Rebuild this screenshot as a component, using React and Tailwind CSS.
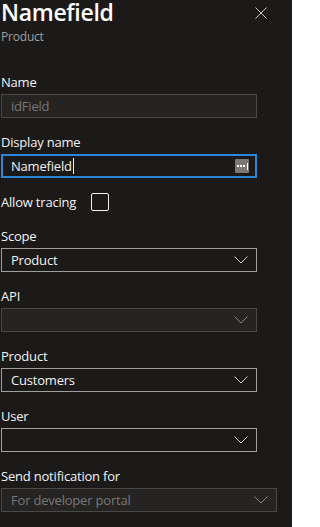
import React from "react";

const Chevron = ({ muted }) => (
  <svg
    width="14"
    height="8"
    viewBox="0 0 14 8"
    fill="none"
    className={muted ? "text-[#8a8886]" : "text-[#d2d0ce]"}
  >
    <path d="M0.5 0.5 L7 7 L13.5 0.5" stroke="currentColor" strokeWidth="1" />
  </svg>
);

const Label = ({ children }) => (
  <div className="text-[13px] leading-[20px] tracking-[-0.2px] text-[#f3f2f1]">{children}</div>
);

const Select = ({ value, disabled, width = "w-[256px]" }) => (
  <div
    className={`${width} h-[24px] mt-[2px] flex items-center justify-between pl-[9px] pr-[8px] border ${
      disabled ? "border-[#4a4846] bg-[#252423] text-[#797775]" : "border-[#a19f9d] bg-[#1b1a19] text-[#f3f2f1]"
    }`}
  >
    <span className="text-[13px] leading-[20px] tracking-[-0.2px]">{value}</span>
    <Chevron muted={disabled} />
  </div>
);

const Field = ({ label, children }) => (
  <div className="mt-[14px]">
    <Label>{label}</Label>
    {children}
  </div>
);

export default function App() {
  return (
    <div
      className="w-[292px] h-[527px] bg-[#1b1a19] overflow-hidden pl-[1px]"
      style={{ fontFamily: '"Open Sans", "Noto Sans", sans-serif' }}
    >
      <div className="flex items-start justify-between">
        <div>
          <div className="text-[23px] leading-[24px] font-semibold text-white tracking-[-0.3px]">
            Namefield
          </div>
          <div className="text-[12px] leading-[16px] tracking-[-0.2px] text-[#a19f9d] mt-[5px]">Product</div>
        </div>
        <button type="button" className="mt-[7px] mr-[25px]" aria-label="Close">
          <svg width="12" height="12" viewBox="0 0 12 12" fill="none">
            <path d="M0.5 0.5 L11.5 11.5 M11.5 0.5 L0.5 11.5" stroke="#c8c6c4" strokeWidth="1" />
          </svg>
        </button>
      </div>

      <div className="mt-[27px]">
        <Label>Name</Label>
        <div className="w-[256px] h-[24px] mt-[2px] flex items-center pl-[9px] border border-[#4a4846] bg-[#252423]">
          <span className="text-[13px] leading-[20px] tracking-[-0.2px] text-[#797775]">idField</span>
        </div>
      </div>

      <Field label="Display name">
        <div className="w-[256px] h-[24px] mt-[2px] flex items-center justify-between pl-[8px] pr-[6px] border-2 border-[#2b88d8] bg-[#1b1a19]">
          <span className="text-[13px] leading-[20px] tracking-[-0.2px] text-[#f3f2f1] flex items-center">
            Namefield
            <span className="inline-block w-[1px] h-[16px] bg-[#f3f2f1] ml-[1px]" />
          </span>
          <span className="w-[14px] h-[14px] bg-[#7a7876] rounded-[1px] flex items-center justify-center gap-[1px]">
            <span className="w-[2px] h-[2px] bg-white" />
            <span className="w-[2px] h-[2px] bg-white" />
            <span className="w-[2px] h-[2px] bg-white" />
            <span className="w-[1px] h-[7px] bg-white ml-[1px]" />
          </span>
        </div>
      </Field>

      <div className="mt-[14px] flex items-center h-[20px]">
        <span className="text-[13px] leading-[20px] tracking-[-0.2px] text-[#f3f2f1] w-[90px]">Allow tracing</span>
        <span className="w-[18px] h-[18px] border border-[#f3f2f1] rounded-[2px]" />
      </div>

      <Field label="Scope">
        <Select value="Product" />
      </Field>

      <Field label="API">
        <Select value="" disabled />
      </Field>

      <Field label="Product">
        <Select value="Customers" />
      </Field>

      <Field label="User">
        <Select value="" />
      </Field>

      <Field label="Send notification for">
        <Select value="For developer portal" disabled width="w-[276px]" />
      </Field>
    </div>
  );
}
